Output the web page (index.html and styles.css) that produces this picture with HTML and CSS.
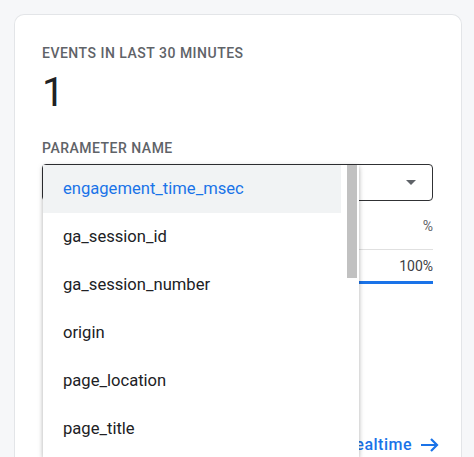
FILE: index.html
```html
<!DOCTYPE html>
<html lang="en">
<head>
<meta charset="utf-8">
<title>Events in last 30 minutes</title>
<link rel="stylesheet" href="styles.css">
</head>
<body>
<div class="card">
  <div class="label">EVENTS IN LAST 30 MINUTES</div>
  <div class="count">1</div>
  <div class="label label-param">PARAMETER NAME</div>
  <div class="select-wrap">
    <div class="select">
      <span class="caret"></span>
    </div>
    <div class="menu">
      <ul class="menu-list">
        <li class="menu-item selected">engagement_time_msec</li>
        <li class="menu-item">ga_session_id</li>
        <li class="menu-item">ga_session_number</li>
        <li class="menu-item">origin</li>
        <li class="menu-item">page_location</li>
        <li class="menu-item">page_title</li>
      </ul>
      <div class="scrollbar"><div class="thumb"></div></div>
    </div>
  </div>
  <div class="table">
    <div class="row head"><span class="pct">%</span></div>
    <div class="row body"><span class="pct val">100%</span></div>
    <div class="bar"></div>
  </div>
  <div class="footer">
    <a class="link" href="#">View realtime
      <svg class="arrow" width="20" height="16" viewBox="0 0 20 16"><path d="M1 8h16M11 2l6 6-6 6" fill="none" stroke="#1a73e8" stroke-width="2.2"/></svg>
    </a>
  </div>
</div>
</body>
</html>
```
FILE: styles.css
```css
html, body {
  margin: 0;
  padding: 0;
  height: 457px;
  overflow: hidden;
  background: #f6f7f9;
  font-family: Roboto, "Liberation Sans", Arial, sans-serif;
}

.card {
  margin: 14px 12px 0 14px;
  height: 443px;
  box-sizing: border-box;
  background: #fff;
  border: 1px solid #e3e5e8;
  border-bottom: none;
  border-radius: 10px 10px 0 0;
  padding: 28px 28px 0 27px;
}

.label {
  font-size: 14px;
  line-height: 20px;
  font-weight: 500;
  letter-spacing: 0.5px;
  color: #5f6368;
}

.count {
  margin-top: 6px;
  font-size: 40px;
  line-height: 48px;
  font-weight: 400;
  color: #202124;
}

.label-param {
  margin-top: 21px;
}

.select-wrap {
  position: relative;
  margin-top: 6px;
}

.select {
  height: 37px;
  box-sizing: border-box;
  border: 1.5px solid #303134;
  border-radius: 4px;
  display: flex;
  align-items: center;
  justify-content: flex-end;
  padding-right: 16px;
}

.caret {
  width: 0;
  height: 0;
  border-left: 5px solid transparent;
  border-right: 5px solid transparent;
  border-top: 5px solid #5f6368;
}

.menu {
  position: absolute;
  top: 1px;
  left: 1px;
  width: 316px;
  height: 292px;
  overflow: hidden;
  background: #fff;
  display: flex;
  box-shadow: 0 2px 4px rgba(0,0,0,0.2), 0 1px 6px rgba(0,0,0,0.15);
  z-index: 2;
}

.menu-list {
  list-style: none;
  margin: 0;
  padding: 0;
  width: 298px;
}

.menu-item {
  height: 48px;
  line-height: 48px;
  padding-left: 20px;
  font-size: 16.6px;
  color: #202124;
}

.menu-item.selected {
  background: #f1f3f4;
  color: #1a73e8;
}

.scrollbar {
  width: 18px;
}

.thumb {
  margin-left: 6px;
  width: 10px;
  height: 113px;
  background: #c1c1c1;
}

.table {
  margin-left: 3px;
  font-size: 14px;
  color: #3c4043;
}

.row {
  display: flex;
  justify-content: flex-end;
}

.row.head {
  height: 47px;
  align-items: center;
  padding-top: 1px;
  border-bottom: 1px solid #e0e0e0;
  color: #5f6368;
}

.row.body {
  height: 31px;
  align-items: center;
}

.bar {
  height: 3px;
  background: #1a73e8;
}

.footer {
  margin-top: 151px;
  display: flex;
  justify-content: flex-end;
}

.link {
  display: flex;
  align-items: center;
  gap: 8px;
  font-size: 16px;
  font-weight: 500;
  letter-spacing: 0.5px;
  color: #1a73e8;
  text-decoration: none;
  margin-right: -7px;
}

.arrow {
  display: block;
}
```
